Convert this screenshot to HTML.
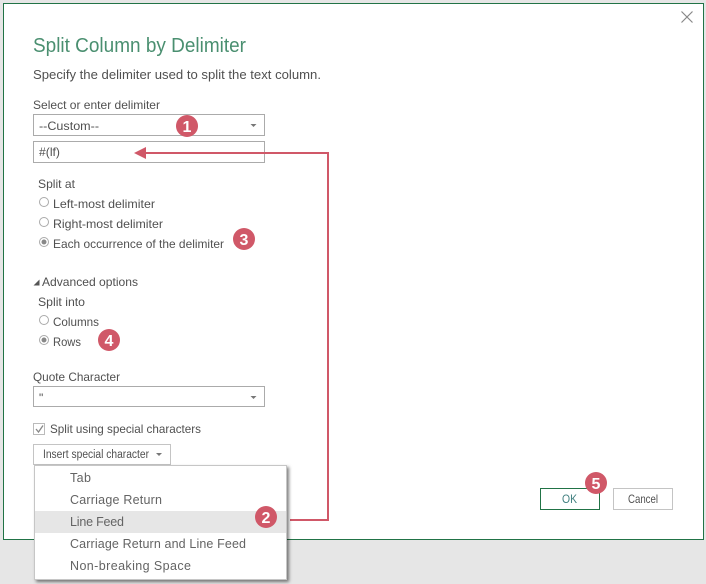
<!DOCTYPE html>
<html>
<head>
<meta charset="utf-8">
<style>
html,body{margin:0;padding:0;width:706px;height:584px;overflow:hidden;background:#e6e6e6}
svg{position:absolute;left:0;top:0;display:block}
text{font-family:"Liberation Sans",sans-serif;font-size:12px;fill:#505050}
.m{font-size:12.5px;fill:#646464}
.n{font-weight:bold;fill:#fff;text-anchor:middle;font-size:16px}
</style>
</head>
<body>
<svg width="706" height="584" viewBox="0 0 706 584" xmlns="http://www.w3.org/2000/svg">
<defs><filter id="s" x="-5%" y="-5%" width="112%" height="112%"><feDropShadow dx="2" dy="2" stdDeviation="1.5" flood-color="#000" flood-opacity=".5"/></filter></defs>
<rect x="3.5" y="3.5" width="700" height="536" fill="#fff" stroke="#217346"/>
<path d="M681.5 11.5l11 11M692.5 11.5l-11 11" stroke="#888" stroke-width="1.2" fill="none"/>
<text x="33" y="52" style="font-size:20px;fill:#4a8f70" textLength="213" lengthAdjust="spacingAndGlyphs">Split Column by Delimiter</text>
<text x="33" y="79" style="font-size:13px" textLength="288" lengthAdjust="spacingAndGlyphs">Specify the delimiter used to split the text column.</text>
<text x="33" y="109" textLength="127" lengthAdjust="spacingAndGlyphs">Select or enter delimiter</text>
<rect x="33.5" y="114.5" width="231" height="21" fill="#fff" stroke="#ababab"/>
<text x="39" y="130" textLength="60" lengthAdjust="spacingAndGlyphs">--Custom--</text>
<path d="M250.5 124h6l-3 3z" fill="#777"/>
<rect x="33.5" y="141.5" width="231" height="21" fill="#fff" stroke="#ababab"/>
<text x="39" y="156" textLength="21" lengthAdjust="spacingAndGlyphs">#(lf)</text>
<text x="38" y="188" textLength="37" lengthAdjust="spacingAndGlyphs">Split at</text>
<circle cx="44" cy="202" r="4.5" fill="#fff" stroke="#aaa"/>
<text x="53" y="208" textLength="102" lengthAdjust="spacingAndGlyphs">Left-most delimiter</text>
<circle cx="44" cy="222" r="4.5" fill="#fff" stroke="#aaa"/>
<text x="53" y="228" textLength="110" lengthAdjust="spacingAndGlyphs">Right-most delimiter</text>
<circle cx="44" cy="242" r="4.5" fill="#fff" stroke="#aaa"/><circle cx="44" cy="242" r="2.5" fill="#888"/>
<text x="53" y="248" textLength="171" lengthAdjust="spacingAndGlyphs">Each occurrence of the delimiter</text>
<path d="M33.5 285.5h6v-6z" fill="#555"/>
<text x="42" y="286" textLength="96" lengthAdjust="spacingAndGlyphs">Advanced options</text>
<text x="38" y="306" textLength="47" lengthAdjust="spacingAndGlyphs">Split into</text>
<circle cx="44" cy="320" r="4.5" fill="#fff" stroke="#aaa"/>
<text x="53" y="326" textLength="46" lengthAdjust="spacingAndGlyphs">Columns</text>
<circle cx="44" cy="340" r="4.5" fill="#fff" stroke="#aaa"/><circle cx="44" cy="340" r="2.5" fill="#888"/>
<text x="53" y="346" textLength="28" lengthAdjust="spacingAndGlyphs">Rows</text>
<text x="33" y="381" textLength="87" lengthAdjust="spacingAndGlyphs">Quote Character</text>
<rect x="33.5" y="386.5" width="231" height="20" fill="#fff" stroke="#ababab"/>
<text x="39" y="402">"</text>
<path d="M250.5 396h6l-3 3z" fill="#777"/>
<rect x="33.5" y="423.5" width="11" height="11" fill="#fff" stroke="#bbb"/>
<path d="M36 429l2.5 3 4.5-6.5" fill="none" stroke="#888" stroke-width="1.3"/>
<text x="50" y="433" textLength="151" lengthAdjust="spacingAndGlyphs">Split using special characters</text>
<rect x="33.5" y="444.5" width="137" height="20" fill="#fff" stroke="#c4c4c4"/>
<text x="43" y="458" style="font-size:11.5px" textLength="106" lengthAdjust="spacingAndGlyphs">Insert special character</text>
<path d="M156 453h6l-3 3z" fill="#777"/>
<text x="562" y="503" textLength="15" lengthAdjust="spacingAndGlyphs" style="fill:#3f7f7f">OK</text>
<rect x="540.5" y="488.5" width="59" height="21" fill="none" stroke="#217346"/>
<rect x="613.5" y="488.5" width="59" height="21" fill="#fff" stroke="#c4c4c4"/>
<text x="628" y="503" textLength="30" lengthAdjust="spacingAndGlyphs">Cancel</text>
<path d="M290 520H328V153H142" fill="none" stroke="#d05868" stroke-width="2"/>
<path d="M134 153l12-6v12z" fill="#d05868"/>
<rect x="34.5" y="465.5" width="252" height="114" fill="#fff" stroke="#c6c6c6" filter="url(#s)"/>
<rect x="35" y="511" width="251" height="22" fill="#e6e6e6"/>
<text class="m" x="70" y="482" textLength="21">Tab</text>
<text class="m" x="70" y="504" textLength="92">Carriage Return</text>
<text class="m" x="70" y="526" textLength="54">Line Feed</text>
<text class="m" x="70" y="548" textLength="176">Carriage Return and Line Feed</text>
<text class="m" x="70" y="570" textLength="121">Non-breaking Space</text>
<g fill="#d05868">
<circle cx="187" cy="126" r="11"/><circle cx="266" cy="517" r="11"/><circle cx="244" cy="239" r="11"/><circle cx="109" cy="340" r="11"/><circle cx="596" cy="483" r="11"/>
</g>
<text class="n" x="187" y="132">1</text>
<text class="n" x="266" y="523">2</text>
<text class="n" x="244" y="245">3</text>
<text class="n" x="109" y="346">4</text>
<text class="n" x="596" y="489">5</text>
</svg>
</body>
</html>
